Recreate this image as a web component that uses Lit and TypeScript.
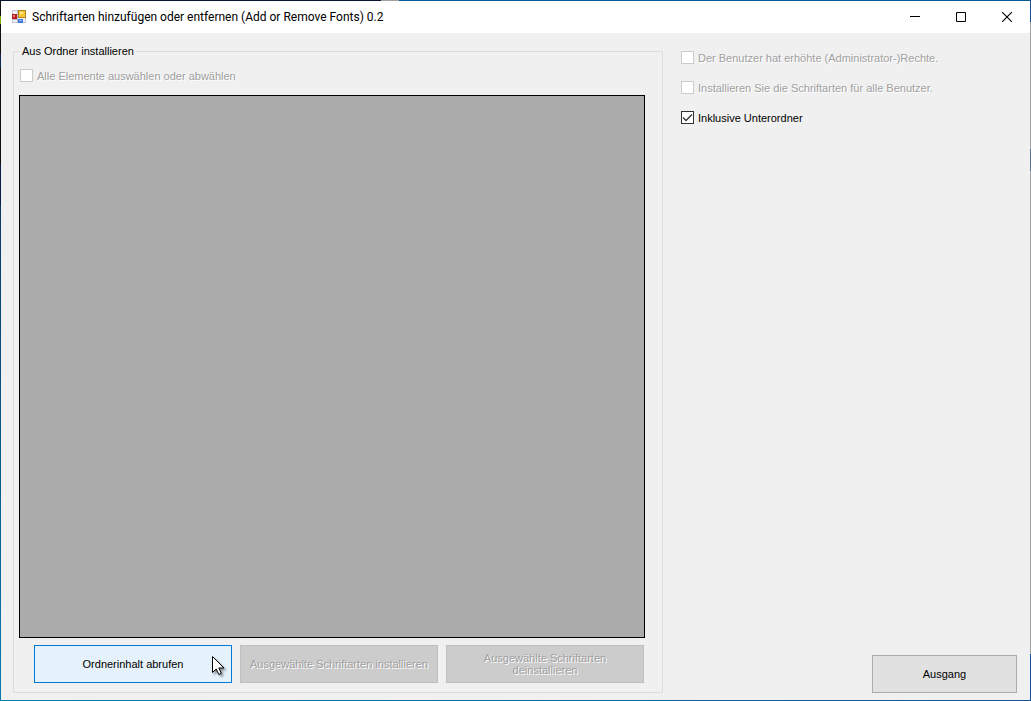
import { LitElement, html, css } from "lit";
import { customElement, state } from "lit/decorators.js";

@customElement("app-root")
export class AppRoot extends LitElement {
  static styles = css`
    :host, * { box-sizing: border-box; }
    :host {
      display: flex;
      flex-direction: column;
      height: 100vh;
      padding: 1px;
      font: 11px/12px "Liberation Sans", Arial, sans-serif;
      color: #000;
      background:
        linear-gradient(90deg, #0a1530 0 381px, #a0a0a0 381px 399px, #0a5a9a 399px) top / 100% 1px no-repeat,
        linear-gradient(90deg, #0a7caf, #12549a) bottom / 100% 1px no-repeat,
        linear-gradient(#101010 0 16px, #7fae00 16px 24px, #101010 24px 54px, #10264a 54px 68px, #101010 68px 165px, #0b1f45 165px 205px, #0b3a66 205px, #0a7caf) left / 1px 100% no-repeat,
        linear-gradient(#12549a 0 22px, #a3a3a3 22px 149px, #5a7290 149px 171px, #a3a3a3 171px 654px, #12549a 654px) right / 1px 100% no-repeat;
    }
    button, input { font: inherit; margin: 0; color: inherit; }
    .titlebar {
      display: flex;
      align-items: center;
      height: 32px;
      padding-left: 10px;
      background: #fff;
    }
    .appicon { margin-right: 5px; }
    h1 {
      flex: 1;
      margin: 0;
      font: 12px/16px "Segoe UI", Roboto, sans-serif;
      white-space: nowrap;
    }
    .winbtn {
      width: 46px;
      height: 32px;
      padding: 0;
      border: 0;
      background: none;
      display: grid;
      place-items: center;
    }
    .client {
      flex: 1;
      min-height: 0;
      display: flex;
      gap: 18px;
      padding: 12px 13px 7px 12px;
      background: #f0f0f0;
    }
    fieldset {
      flex: 1;
      min-width: 0;
      display: flex;
      flex-direction: column;
      margin: 0;
      padding: 12px 17px 9px 5px;
      border: 1px solid #dcdcdc;
    }
    legend { padding: 0 2px; margin-left: 1px; }
    .check {
      display: flex;
      align-items: center;
      gap: 4px;
      height: 13px;
      white-space: nowrap;
    }
    fieldset .check { padding-left: 1px; }
    .check input {
      appearance: none;
      flex: none;
      width: 13px;
      height: 13px;
      border: 1px solid #333;
      background: #fff;
    }
    .check input:checked {
      background: #fff url("data:image/svg+xml,%3Csvg xmlns='http://www.w3.org/2000/svg' width='11' height='11'%3E%3Cpath d='M1 5.5l3 3 6-6' fill='none' stroke='%23333' stroke-width='1.3'/%3E%3C/svg%3E") center no-repeat;
    }
    .check input:disabled { border-color: #ccc; }
    .check.off { color: #a0a0a0; text-shadow: 1px 1px #fff; }
    .list {
      flex: 1;
      min-height: 0;
      margin-top: 13px;
      border: 1px solid #000;
      background: #ababab;
    }
    .actions {
      display: flex;
      gap: 8px;
      padding: 7px 1px 0 15px;
    }
    .push {
      height: 38px;
      padding: 0 6px;
      border: 1px solid #adadad;
      background: #e1e1e1;
    }
    .actions .push { flex: 1 1 0; min-width: 0; position: relative; }
    .push.hot { border-color: #0078d7; background: #e5f1fb; }
    .push:disabled {
      border-color: #bfbfbf;
      background: #ccc;
      color: #a0a0a0;
      text-shadow: 1px 1px #fff;
    }
    .pointer {
      position: absolute;
      right: 1px;
      top: 10px;
      filter: drop-shadow(2px 2px 1px rgba(0, 0, 0, 0.4));
    }
    .side {
      width: 336px;
      display: flex;
      flex-direction: column;
      gap: 17px;
      padding-top: 6px;
    }
    .exit { width: 145px; margin: auto 0 0 auto; }
  `;

  @state() private subfolders = true;

  render() {
    return html`
      <header class="titlebar">
        <svg class="appicon" width="16" height="16" viewBox="0 0 16 16" shape-rendering="crispEdges" aria-hidden="true">
          <path d="M1 1h13v12H1z" transform="translate(.5 .5)" fill="#eef0f6" stroke="#c4c6d0" />
          <path d="M6.500 1v13M1 10.500h6" stroke="#b8bac8" />
          <path d="M1 5h5v5H1z" fill="#b5201c" />
          <path d="M2 6h2v2H2z" fill="#f08080" />
          <path d="M7.500 1.500h7v7h-7z" fill="#f6c935" stroke="#b5831b" />
          <path d="M9 3h3v2H9z" fill="#ffe88a" />
          <path d="M7 10h5v4H7z" fill="#3f78dc" />
          <path d="M8 11h3v1H8z" fill="#8fb8ff" />
        </svg>
        <h1>Schriftarten hinzufügen oder entfernen (Add or Remove Fonts) 0.2</h1>
        <button class="winbtn" aria-label="Minimieren">
          <svg width="10" height="10"><path d="M0 4.500h10" stroke="#000" /></svg>
        </button>
        <button class="winbtn" aria-label="Maximieren">
          <svg width="10" height="10"><path d="M.5.5h9v9h-9z" fill="none" stroke="#000" /></svg>
        </button>
        <button class="winbtn" aria-label="Schließen">
          <svg width="10" height="10"><path d="M0 0l10 10M10 0L0 10" stroke="#000" stroke-width="1.100" /></svg>
        </button>
      </header>
      <main class="client">
        <fieldset>
          <legend>Aus Ordner installieren</legend>
          <label class="check off"><input type="checkbox" disabled />Alle Elemente auswählen oder abwählen</label>
          <div class="list"></div>
          <div class="actions">
            <button class="push hot">
              Ordnerinhalt abrufen
              <svg class="pointer" width="18" height="20" viewBox="0 0 18 20" aria-hidden="true">
                <path d="M.5.5v16l3.700-3.500 2.600 5.500 2.500-1.200-2.500-5.300h5.200z" fill="#fff" stroke="#000" />
              </svg>
            </button>
            <button class="push" disabled>Ausgewählte Schriftarten installieren</button>
            <button class="push" disabled>Ausgewählte Schriftarten deinstallieren</button>
          </div>
        </fieldset>
        <div class="side">
          <label class="check off"><input type="checkbox" disabled />Der Benutzer hat erhöhte (Administrator-)Rechte.</label>
          <label class="check off"><input type="checkbox" disabled />Installieren Sie die Schriftarten für alle Benutzer.</label>
          <label class="check">
            <input
              type="checkbox"
              .checked=${this.subfolders}
              @change=${(e: Event) => (this.subfolders = (e.target as HTMLInputElement).checked)}
            />Inklusive Unterordner
          </label>
          <button class="push exit">Ausgang</button>
        </div>
      </main>
    `;
  }
}
